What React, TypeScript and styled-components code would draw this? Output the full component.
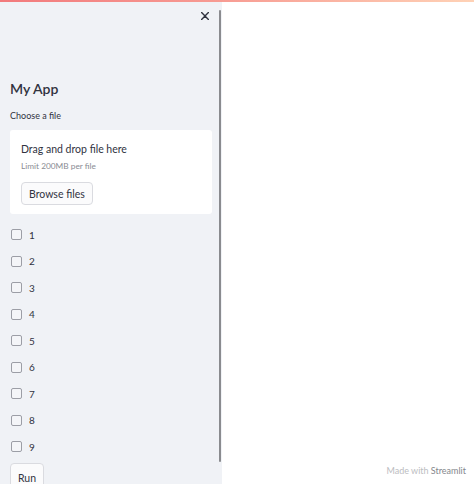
import React from "react";
import styled, { createGlobalStyle } from "styled-components";

const GlobalStyle = createGlobalStyle`
  html, body { margin: 0; padding: 0; height: 100%; overflow: hidden; background: #ffffff; }
  body { font-family: Lato, "Open Sans", Roboto, sans-serif; color: #31333f; }
  #root { height: 100%; }
  * { box-sizing: border-box; }
`;

const Page = styled.div`
  position: relative;
  display: flex;
  height: 100vh;
  width: 100%;
`;

const Decoration = styled.div`
  position: absolute;
  top: 0;
  left: 0;
  right: 0;
  height: 2px;
  background: linear-gradient(90deg, #f27a7c 0%, #f79a92 45%, #ffd2b6 100%);
  z-index: 10;
`;

const Sidebar = styled.aside`
  position: relative;
  width: 222px;
  flex: 0 0 222px;
  background: #f0f2f6;
  display: flex;
  flex-direction: column;
  padding: 0 10px 0 10px;
  overflow: hidden;
`;

const ScrollThumb = styled.div`
  position: absolute;
  top: 10px;
  bottom: 22px;
  right: 1.5px;
  width: 1.6px;
  border-radius: 1px;
  background: #8a8b8f;
`;

const SidebarHeader = styled.div`
  height: 32px;
  display: flex;
  align-items: center;
  justify-content: flex-end;
  margin-right: 1px;
  flex: none;
`;

const CloseButton = styled.button`
  width: 12px;
  height: 12px;
  padding: 0;
  border: none;
  background: transparent;
  display: flex;
  align-items: center;
  justify-content: center;
  cursor: pointer;
  color: #31333f;
`;

const Title = styled.h1`
  margin: 48px 0 0 0;
  font-size: 14px;
  line-height: 17px;
  font-weight: 600;
  color: #31333f;
`;

const FieldLabel = styled.label`
  display: block;
  margin-top: 13px;
  font-size: 9px;
  line-height: 11px;
  color: #31333f;
`;

const Dropzone = styled.section`
  margin-top: 9px;
  background: #ffffff;
  border-radius: 3px;
  padding: 13px 11px 9px 11px;
  display: flex;
  flex-direction: column;
  align-items: flex-start;
`;

const DropTitle = styled.span`
  font-size: 10.5px;
  line-height: 13px;
  color: #31333f;
`;

const DropHint = styled.span`
  margin-top: 5px;
  font-size: 8.3px;
  line-height: 10px;
  color: #8a8c93;
`;

const Button = styled.button<{ $mt?: number; $h?: number }>`
  margin-top: ${(p) => p.$mt ?? 0}px;
  height: ${(p) => p.$h ?? 23}px;
  padding: 0 7px;
  border: 1px solid #dadbe0;
  border-radius: 4px;
  background: #fbfbfc;
  font-family: inherit;
  font-size: 10.5px;
  color: #31333f;
  display: inline-flex;
  align-items: center;
  justify-content: center;
  flex: none;
  align-self: flex-start;
`;

const CheckList = styled.div`
  margin-top: 7.5px;
  display: flex;
  flex-direction: column;
`;

const CheckRow = styled.label`
  height: 26.5px;
  display: flex;
  align-items: center;
  gap: 7px;
  padding-left: 1px;
  font-size: 10px;
  color: #31333f;
`;

const Box = styled.span`
  width: 11px;
  height: 11px;
  border: 1px solid #9c9ea6;
  border-radius: 2px;
  background: #f4f5f8;
  flex: none;
`;

const Main = styled.main`
  flex: 1;
  display: flex;
  align-items: flex-end;
  justify-content: flex-end;
  padding: 0 8px 8px 0;
`;

const Footer = styled.div`
  font-size: 9px;
  line-height: 11px;
  color: #bcbdc1;
`;

const FooterBrand = styled.span`
  color: #85878d;
`;

export default function App() {
  const items = [1, 2, 3, 4, 5, 6, 7, 8, 9];
  return (
    <>
      <GlobalStyle />
      <Page>
        <Decoration />
        <Sidebar>
          <ScrollThumb />
          <SidebarHeader>
            <CloseButton aria-label="Close">
              <svg width="8" height="8" viewBox="0 0 8 8">
                <path d="M0.6 0.6 L7.4 7.4 M7.4 0.6 L0.6 7.4" stroke="#31333f" strokeWidth="1.4" strokeLinecap="round" />
              </svg>
            </CloseButton>
          </SidebarHeader>
          <Title>My App</Title>
          <FieldLabel>Choose a file</FieldLabel>
          <Dropzone>
            <DropTitle>Drag and drop file here</DropTitle>
            <DropHint>Limit 200MB per file</DropHint>
            <Button $mt={11}>Browse files</Button>
          </Dropzone>
          <CheckList>
            {items.map((n) => (
              <CheckRow key={n}>
                <Box />
                {n}
              </CheckRow>
            ))}
          </CheckList>
          <Button $mt={3} $h={30}>Run</Button>
        </Sidebar>
        <Main>
          <Footer>
            Made with <FooterBrand>Streamlit</FooterBrand>
          </Footer>
        </Main>
      </Page>
    </>
  );
}
